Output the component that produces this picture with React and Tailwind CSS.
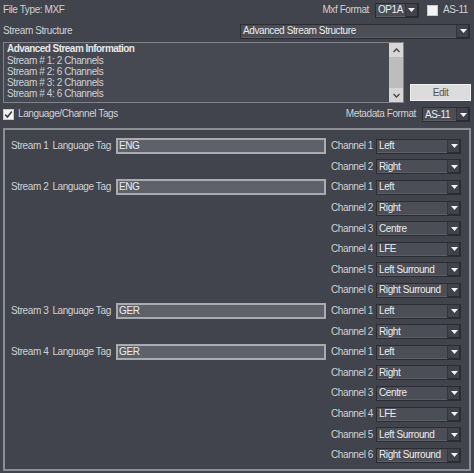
import React from "react";

const FONT = { fontFamily: '"Liberation Sans", Arial, sans-serif' };

function Arrow() {
  return (
    <svg width="7" height="4" viewBox="0 0 7 4" className="block">
      <path d="M0 0 H7 L3.5 4 Z" fill="#f2f2f2" />
    </svg>
  );
}

function Drop({ text, className = "" }) {
  return (
    <div
      className={
        "flex items-stretch border border-[#2b2d33] bg-[#4b4e57] shadow-[inset_-1px_-1px_0_#5c5f68] " +
        className
      }
    >
      <div className="flex-1 min-w-0 flex items-center pl-[2px] text-[#ececec] leading-none whitespace-nowrap overflow-hidden">
        {text}
      </div>
      <div className="w-[13px] shrink-0 flex items-center justify-center bg-[#40434b] border-l border-[#34363d] shadow-[inset_-1px_-1px_0_#2a2c31]">
        <Arrow />
      </div>
    </div>
  );
}

function CheckBox({ checked }) {
  return (
    <div className="w-[11px] h-[11px] bg-[#f4f4f4] border border-[#c9c9c9] flex items-center justify-center">
      {checked && (
        <svg width="9" height="9" viewBox="0 0 9 9" className="block">
          <path d="M1.2 4.6 L3.5 7 L7.8 1.6" fill="none" stroke="#3a3a3a" strokeWidth="1.6" />
        </svg>
      )}
    </div>
  );
}

const rows = [
  { stream: "Stream 1", tag: "ENG", ch: 1, val: "Left" },
  { ch: 2, val: "Right" },
  { stream: "Stream 2", tag: "ENG", ch: 1, val: "Left" },
  { ch: 2, val: "Right" },
  { ch: 3, val: "Centre" },
  { ch: 4, val: "LFE" },
  { ch: 5, val: "Left Surround" },
  { ch: 6, val: "Right Surround" },
  { stream: "Stream 3", tag: "GER", ch: 1, val: "Left" },
  { ch: 2, val: "Right" },
  { stream: "Stream 4", tag: "GER", ch: 1, val: "Left" },
  { ch: 2, val: "Right" },
  { ch: 3, val: "Centre" },
  { ch: 4, val: "LFE" },
  { ch: 5, val: "Left Surround" },
  { ch: 6, val: "Right Surround" },
];

export default function App() {
  return (
    <div
      style={FONT}
      className="w-[474px] h-[473px] bg-[#41444d] text-[#d0d1d4] text-[10px] tracking-[-0.4px] leading-none overflow-hidden"
    >
      {/* Row 1 */}
      <div className="h-[20px] flex items-center pl-[3px] pr-[6px]">
        <span>File Type: MXF</span>
        <span className="ml-auto mr-[6px]">Mxf Format</span>
        <Drop text="OP1A" className="w-[44px] h-[15px]" />
        <div className="ml-[8px] mr-[5px]">
          <CheckBox />
        </div>
        <span>AS-11</span>
      </div>

      {/* Row 2 */}
      <div className="h-[18px] mt-[2px] flex items-center pl-[3px] pr-[4px]">
        <span>Stream Structure</span>
        <Drop text="Advanced Stream Structure" className="ml-auto w-[230px] h-[15px]" />
      </div>

      {/* Info box + Edit */}
      <div className="mt-[2px] flex pl-[3px]">
        <div className="w-[401px] h-[61px] border border-[#80838a] bg-[#464952] flex">
          <div className="flex-1 pl-[3px] flex flex-col">
            <div className="font-bold text-[10px] tracking-[-0.55px] text-[#e6e6e6] h-[12px] leading-[12px]">Advanced Stream Information</div>
            <div className="h-[11px] leading-[11px]">Stream # 1: 2 Channels</div>
            <div className="h-[11px] leading-[11px]">Stream # 2: 6 Channels</div>
            <div className="h-[11px] leading-[11px]">Stream # 3: 2 Channels</div>
            <div className="h-[11px] leading-[11px]">Stream # 4: 6 Channels</div>
          </div>
          <div className="w-[14px] bg-[#bdbdbd] flex flex-col justify-between">
            <div className="h-[14px] bg-[#d6d6d6] flex items-center justify-center">
              <svg width="7" height="5" viewBox="0 0 7 5"><path d="M0.5 4 L3.5 1 L6.5 4" fill="none" stroke="#444" strokeWidth="1.3" /></svg>
            </div>
            <div className="h-[14px] bg-[#d6d6d6] flex items-center justify-center">
              <svg width="7" height="5" viewBox="0 0 7 5"><path d="M0.5 1 L3.5 4 L6.5 1" fill="none" stroke="#444" strokeWidth="1.3" /></svg>
            </div>
          </div>
        </div>
        <div className="ml-[6px] self-end mb-[2px] w-[61px] h-[17px] bg-[#dcdcdc] border border-[#eeeeee] flex items-center justify-center text-[#555] ">
          Edit
        </div>
      </div>

      {/* Checkbox row */}
      <div className="h-[18px] mt-[2px] flex items-center pl-[3px] pr-[4px]">
        <CheckBox checked />
        <span className="ml-[4px]">Language/Channel Tags</span>
        <span className="ml-auto mr-[6px]">Metadata Format</span>
        <Drop text="AS-11" className="w-[48px] h-[15px] mt-[1px]" />
      </div>

      {/* Group panel */}
      <div className="mt-[5px] ml-[3px] w-[468px] h-[343px] border-2 border-[#8b8e95] pt-[6px] pl-[6px]">
        {rows.map((r, i) => (
          <div
            key={i}
            className="h-[20.6px] grid grid-cols-[105px_210px_5px_45px_85px] items-center"
          >
            <div className="whitespace-nowrap">
              {r.stream ? (
                <span>
                  {r.stream}
                  <span className="ml-[4px]">Language Tag</span>
                </span>
              ) : null}
            </div>
            <div>
              {r.tag ? (
                <div className="h-[16px] border-2 border-[#a9abb0] bg-[#5e6169] flex items-center pl-[1px] text-[#ececec]">
                  {r.tag}
                </div>
              ) : null}
            </div>
            <div />
            <div className="whitespace-nowrap">Channel {r.ch}</div>
            <Drop text={r.val} className="h-[15px]" />
          </div>
        ))}
      </div>
    </div>
  );
}
